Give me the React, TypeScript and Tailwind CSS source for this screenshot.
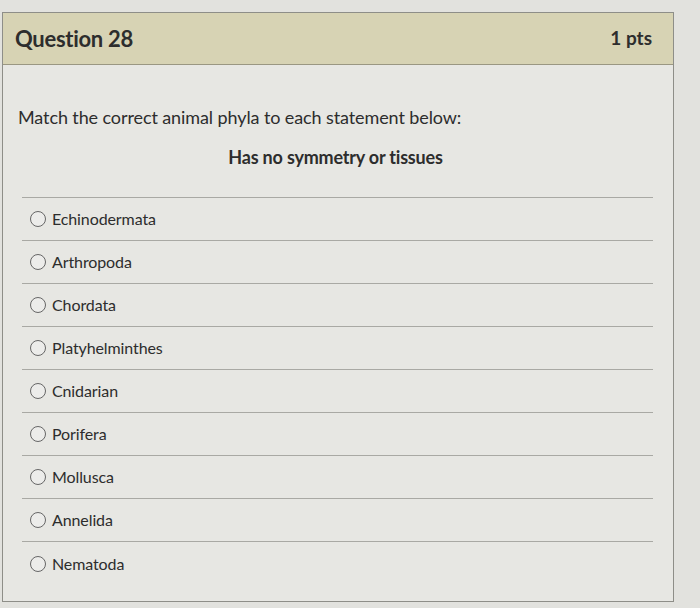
const options = [
  "Echinodermata",
  "Arthropoda",
  "Chordata",
  "Platyhelminthes",
  "Cnidarian",
  "Porifera",
  "Mollusca",
  "Annelida",
  "Nematoda",
];

export default function App() {
  return (
    <div className="w-[700px] h-[608px] bg-[#e2e2de] pt-[12px] pl-[2px] font-['Lato','Liberation_Sans',sans-serif] text-[#2d2d2d]">
      <div className="w-[672px] h-[590px] border border-[#8e8e88] bg-[#e7e7e3] flex flex-col">
        {/* header */}
        <div className="h-[52px] bg-[#d7d3b4] border-b border-[#9a9782] flex items-center justify-between pl-[12px] pr-[21px]">
          <h2 className="text-[22px] font-bold tracking-[-0.3px]">Question 28</h2>
          <span className="text-[19px] font-bold">1 pts</span>
        </div>

        {/* body */}
        <div className="pl-[15px] pr-[20px] pt-[40px]">
          <p className="text-[18px] leading-[24px] tracking-[-0.1px]">Match the correct animal phyla to each statement below:</p>
          <p className="text-[18px] leading-[24px] font-bold text-center mt-[16px] tracking-[-0.2px]">Has no symmetry or tissues</p>

          <div className="mt-[28px] ml-[4px] border-t border-[#a9a9a4]">
            {options.map((o, i) => (
              <label
                key={o}
                className={
                  i < options.length - 1
                    ? "flex items-center h-[43px] border-b border-[#a9a9a4] pl-[8px] gap-[6px]"
                    : "flex items-center h-[43px] pl-[8px] gap-[6px]"
                }
              >
                <span className="w-[16px] h-[16px] rounded-full border-[1.5px] border-[#666] bg-[#ececea]" />
                <span className="text-[16px] tracking-[-0.1px]">{o}</span>
              </label>
            ))}
          </div>
        </div>
      </div>
    </div>
  );
}
